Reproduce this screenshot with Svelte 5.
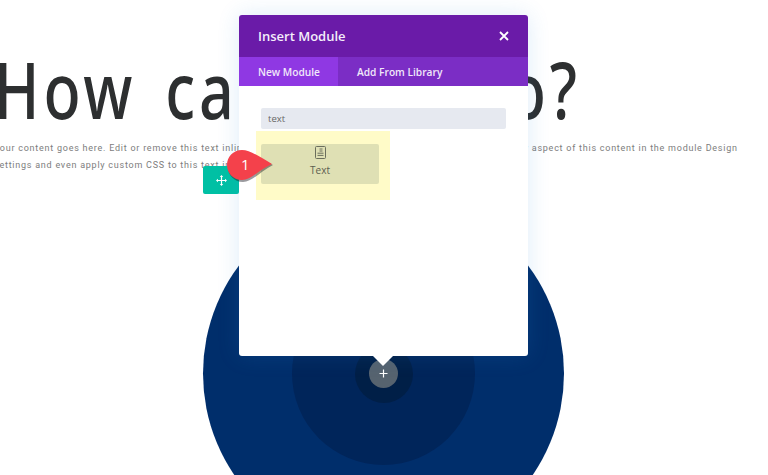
<script>
  let query = 'text'
  const tabs = ['New Module', 'Add From Library']
</script>

<div class="page">
  <div class="hero">
    <h1>How can I do so?</h1>
    <p>Your content goes here. Edit or remove this text inline or in the module Content settings. You can also style every aspect of this content in the module Design settings and even apply custom CSS to this text in the module Advanced settings.</p>
  </div>

  <div class="circle outer">
    <div class="circle middle">
      <div class="circle inner">
        <button class="circle core" aria-label="Add">
          <svg width="9" height="9" viewBox="0 0 9 9"><path d="M4.5 0.500v8M0.500 4.500h8" stroke="#fff" stroke-width="1.200" /></svg>
        </button>
      </div>
    </div>
  </div>

  <button class="move" aria-label="Move">
    <svg width="11" height="11" viewBox="0 0 11 11" fill="#fff">
      <path d="M5.500 0l1.700 2H6.100v2.900H9V3.800l2 1.700-2 1.700V6.100H6.100V9h1.100l-1.700 2-1.700-2h1.100V6.100H2v1.100L0 5.500l2-1.700v1.100h2.900V2H3.800z" />
    </svg>
  </button>

  <div class="modal">
    <header>
      <h2>Insert Module</h2>
      <svg class="close" width="10" height="10" viewBox="0 0 10 10"><path d="M1 1l8 8M9 1l-8 8" stroke="#fff" stroke-width="1.800" /></svg>
    </header>
    <nav>
      {#each tabs as tab, i}
        <span class="tab" class:active={i === 0}>{tab}</span>
      {/each}
    </nav>
    <div class="body">
      <input class="search" bind:value={query} />
      <div class="highlight">
        <div class="module">
          <svg width="11" height="13" viewBox="0 0 11 13" fill="none" stroke="#6b6e5c" stroke-width="1">
            <path d="M1.500 0.500h8a1 1 0 0 1 1 1v10a1 1 0 0 1-1 1h-8a1 1 0 0 1-1-1v-10a1 1 0 0 1 1-1z" />
            <path d="M4.500 3h3M4.500 5h3M2.500 7.200h6M2.500 9.400h6" />
          </svg>
          <span>Text</span>
        </div>
      </div>
    </div>
    <div class="arrow"></div>
  </div>

  <div class="pin">
    <svg width="50" height="36" viewBox="0 0 50 36">
      <path class="pin-shadow" d="M16 2C24 2 34 9 46 15 34 21 25 32 16 32 7 32 1 25 1 17 1 8 7 2 16 2z" />
      <path fill="#f4414b" d="M15 0C23 0 33 7 45 14 33 19 24 30 15 30 6 30 0 23 0 15 0 7 6 0 15 0z" />
    </svg>
    <span>1</span>
  </div>
</div>

<style>
  :global(body) { margin: 0; background: #fff; }

  .page {
    position: relative;
    width: 768px;
    height: 475px;
    overflow: hidden;
    background: #fff;
    font-family: "Open Sans", sans-serif;
  }

  .hero { height: 193px; overflow: hidden; }

  h1 {
    margin: 0 0 0 -6px;
    padding-top: 44px;
    width: 760px;
    font-family: "Noto Sans", sans-serif;
    font-weight: 500;
    font-size: 78px;
    line-height: 90px;
    letter-spacing: 5px;
    word-spacing: 12px;
    white-space: nowrap;
    color: #2d2f30;
    transform: scaleX(0.78);
    transform-origin: left;
  }

  p {
    margin: 6px 0 0 -6px;
    width: 752px;
    font-family: "Roboto", sans-serif;
    font-size: 9px;
    line-height: 17px;
    letter-spacing: 0.755px;
    color: #7d7d7d;
  }

  .circle {
    display: flex;
    align-items: center;
    justify-content: center;
    border-radius: 50%;
    box-sizing: border-box;
  }
  .outer { width: 361px; height: 361px; margin-left: 203px; background: #002e6b; }
  .middle { width: 183px; height: 183px; background: #00255a; }
  .inner { width: 58px; height: 58px; background: #001f47; }
  .core { width: 29px; height: 29px; padding: 0; border: 0; background: #56636f; }

  .move {
    position: absolute;
    left: 203px;
    top: 166px;
    width: 36px;
    height: 28px;
    padding: 0;
    border: 0;
    border-radius: 2px;
    background: #00c0a4;
    display: flex;
    align-items: center;
    justify-content: center;
  }

  .modal {
    position: absolute;
    left: 239px;
    top: 15px;
    width: 289px;
    height: 341px;
    display: flex;
    flex-direction: column;
    background: #fff;
    border-radius: 3px;
    box-shadow: 0 0 22px rgba(43, 135, 218, 0.16);
  }

  header {
    height: 42px;
    flex: none;
    display: flex;
    align-items: center;
    justify-content: space-between;
    padding: 0 19px;
    background: #6a1ba8;
    border-radius: 3px 3px 0 0;
  }
  h2 { margin: 0; font-size: 13px; font-weight: 600; color: #f4eefa; }

  nav { height: 29px; flex: none; display: flex; background: #7b2dc5; }
  .tab {
    display: flex;
    align-items: center;
    padding: 0 19px;
    font-size: 10.200px;
    font-weight: 600;
    white-space: nowrap;
    color: #f1e8fa;
  }
  .active { width: 99px; box-sizing: border-box; background: #8f38e3; }

  .body { flex: 1; padding: 22px 22px 0; }

  .search {
    display: block;
    width: 245px;
    height: 21px;
    box-sizing: border-box;
    padding: 0 7px;
    border: 0;
    border-radius: 2px;
    outline: none;
    background: #e6e9f0;
    font-family: inherit;
    font-size: 9.500px;
    color: #666;
  }

  .highlight {
    width: 134px;
    height: 69px;
    margin: 2px 0 0 -5px;
    padding: 13px 11px 0 5px;
    box-sizing: border-box;
    background: #fffbc8;
  }
  .module {
    height: 40px;
    box-sizing: border-box;
    padding-bottom: 6px;
    display: flex;
    flex-direction: column;
    align-items: center;
    justify-content: center;
    gap: 4px;
    border-radius: 2px;
    background: #dfe0b4;
    font-size: 10px;
    color: #5c5e50;
  }

  .arrow {
    position: absolute;
    left: 134px;
    top: 341px;
    width: 0;
    height: 0;
    border-left: 10px solid transparent;
    border-right: 10px solid transparent;
    border-top: 10px solid #fff;
  }

  .pin {
    position: absolute;
    left: 227px;
    top: 150px;
    width: 50px;
    height: 36px;
  }
  .pin svg { display: block; }
  .pin-shadow { fill: rgba(30, 30, 40, 0.45); }
  .pin span {
    position: absolute;
    left: 14px;
    top: 4px;
    font-size: 15px;
    line-height: 20px;
    color: #fff;
  }
</style>
